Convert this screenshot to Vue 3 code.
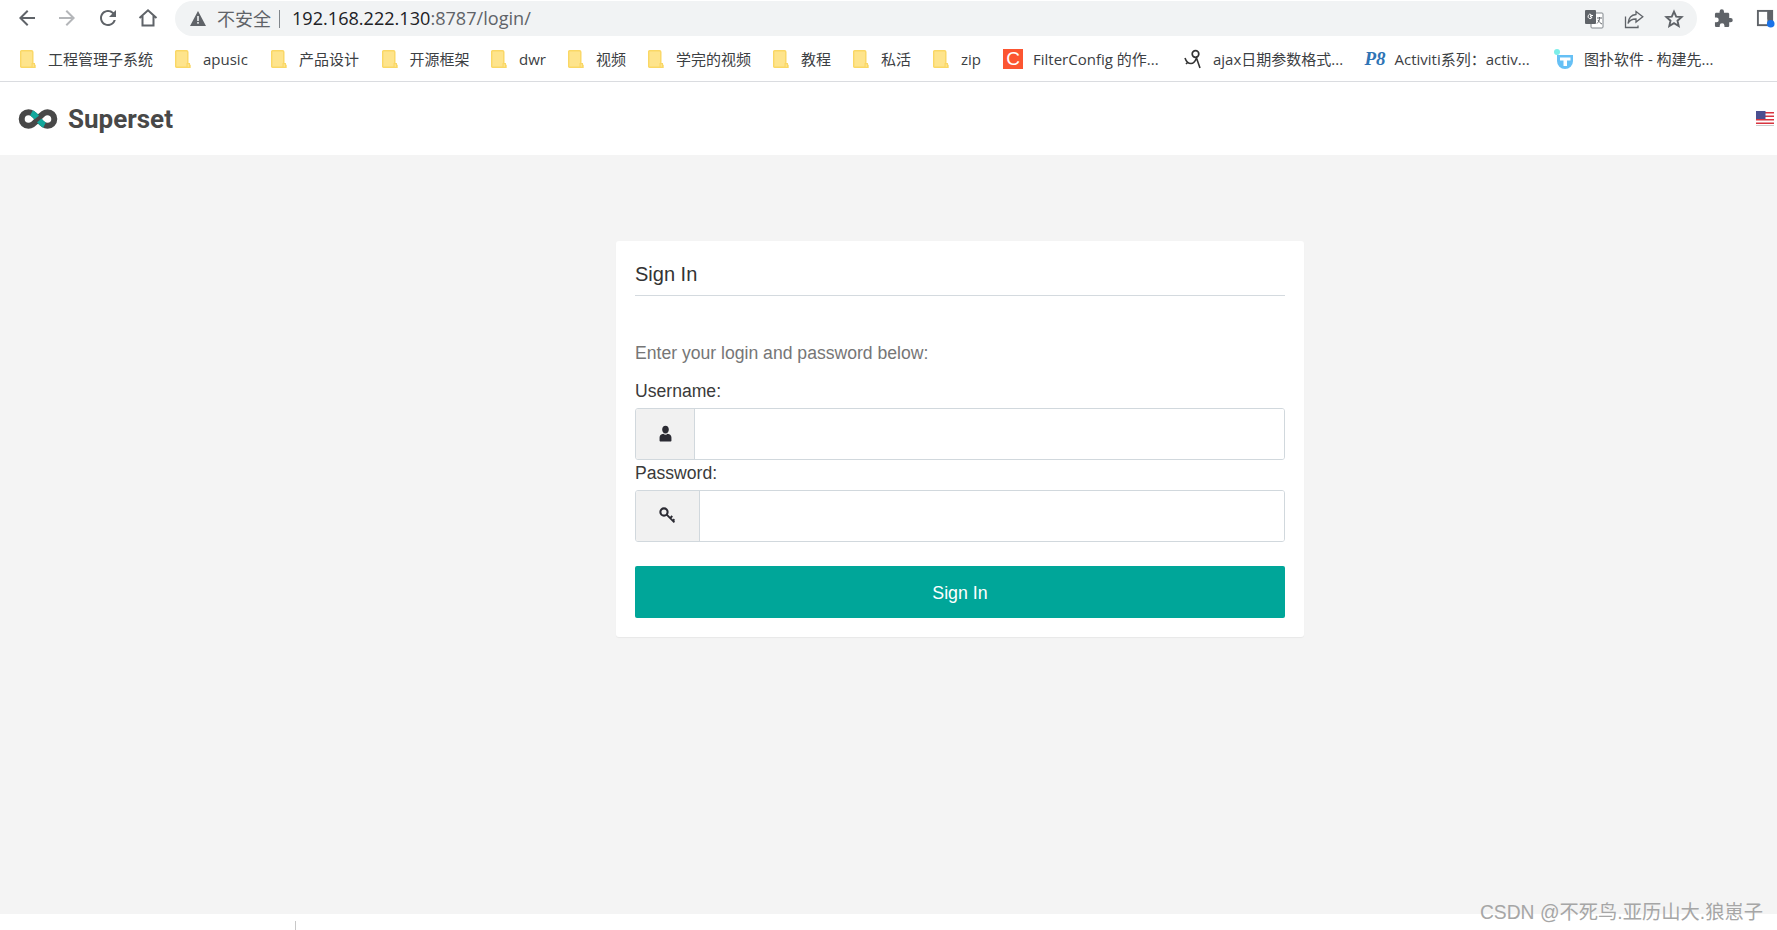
<script setup>
const bookmarks = [
  { label: '工程管理子系统', icon: 'folder', width: 155 },
  { label: 'apusic', icon: 'folder', width: 96 },
  { label: '产品设计', icon: 'folder', width: 110.5 },
  { label: '开源框架', icon: 'folder', width: 109.5 },
  { label: 'dwr', icon: 'folder', width: 77 },
  { label: '视频', icon: 'folder', width: 80 },
  { label: '学完的视频', icon: 'folder', width: 125 },
  { label: '教程', icon: 'folder', width: 80 },
  { label: '私活', icon: 'folder', width: 80 },
  { label: 'zip', icon: 'folder', width: 70 },
  { label: 'FilterConfig 的作...', icon: 'csdn', width: 180 },
  { label: 'ajax日期参数格式...', icon: 'ajax', width: 181.5 },
  { label: 'Activiti系列：activ...', icon: 'ps', width: 189.5 },
  { label: '图扑软件 - 构建先...', icon: 'topo', width: 170 }
]
</script>

<template>
  <div class="page">
    <div class="browser">
      <div class="toolbar">
        <div class="nav-icons">
          <svg class="tb-icon" viewBox="0 0 24 24"><path fill="#5f6368" d="M20 11H7.830l5.590-5.590L12 4l-8 8 8 8 1.410-1.410L7.830 13H20v-2z"/></svg>
          <svg class="tb-icon" viewBox="0 0 24 24"><path fill="#b4b6b9" d="M4 11h12.170l-5.590-5.590L12 4l8 8-8 8-1.410-1.410L16.170 13H4v-2z"/></svg>
          <svg class="tb-icon" viewBox="0 0 24 24"><path fill="#5f6368" d="M17.650 6.350A7.958 7.958 0 0 0 12 4c-4.420 0-7.990 3.580-7.990 8s3.570 8 7.990 8c3.730 0 6.840-2.550 7.730-6h-2.080A5.990 5.990 0 0 1 12 18c-3.310 0-6-2.690-6-6s2.690-6 6-6c1.660 0 3.140.690 4.220 1.780L13 11h7V4l-2.350 2.350z"/></svg>
          <svg class="tb-icon" viewBox="0 0 24 24"><path fill="none" stroke="#5f6368" stroke-width="2" stroke-linejoin="miter" d="M3.500 12 12 4.300l8.500 7.700M6.500 10v9.500h11V10"/></svg>
        </div>
        <div class="omnibox">
          <svg class="warn" viewBox="0 0 16 15"><path fill="#5f6368" d="M8 0 16 15H0z"/><rect x="7.200" y="5" width="1.600" height="5" fill="#f1f3f4"/><rect x="7.200" y="11" width="1.600" height="1.700" fill="#f1f3f4"/></svg>
          <span class="insecure">不安全</span>
          <span class="sep"></span>
          <span class="url"><span class="host">192.168.222.130</span>:8787/login/</span>
          <div class="omni-actions">
            <svg class="act" viewBox="0 0 20 20">
              <rect x="7" y="4" width="12" height="15" rx="1" fill="#fff" stroke="#80868b"/>
              <rect x="1" y="1" width="11" height="14" rx="1" fill="#5f6368"/>
              <path d="M9 6.500H6.500v1.500H8a2 2.200 0 1 1-.6-2.200" fill="none" stroke="#fff" stroke-width="1"/>
              <path d="M13 9h5M15.500 8v1.500c0 2-1.500 4-2.500 5M14 11c.7 1.500 2.500 3.500 4 4" fill="none" stroke="#5f6368"/>
            </svg>
            <svg class="act" viewBox="0 0 20 20"><path fill="none" stroke="#5f6368" stroke-width="1.300" d="M1.500 7.500v11h12.500v-2M12 2.500l6.800 5.300-6.800 5.300V10c-4 0-6.500 1.200-8 4.500C4.500 9.500 7.500 5.800 12 5.500z"/></svg>
            <svg class="act" viewBox="0 0 20 20"><path fill="none" stroke="#5f6368" stroke-width="1.900" d="M10 2.600l2.200 5 5.400.5-4.100 3.600 1.200 5.300-4.700-2.800-4.700 2.800 1.200-5.300-4.100-3.600 5.400-.5z"/></svg>
          </div>
        </div>
        <div class="ext-icons">
          <svg class="ext" viewBox="0 0 20 20"><path fill="#5f6368" d="M17.500 9.500H16V5.500c0-.9-.7-1.500-1.500-1.500h-4V2.500a2.300 2.300 0 0 0-4.600 0V4H2.500C1.700 4 1 4.600 1 5.500V9h1.500a2.500 2.500 0 0 1 0 5H1v3.500c0 .9.700 1.500 1.500 1.500H6v-1.500a2.500 2.500 0 0 1 5 0V19h3.500c.9 0 1.500-.7 1.500-1.500v-3.500h1.500a2.250 2.250 0 0 0 0-4.500z"/></svg>
          <svg class="ext" viewBox="0 0 20 20"><rect x="1" y="1" width="17" height="17" fill="#5f6368"/><rect x="3" y="3" width="9" height="13" fill="#fff"/><rect x="12" y="3" width="4" height="8" fill="#5f6368"/><circle cx="15.500" cy="15.500" r="4" fill="#1a73e8"/></svg>
        </div>
      </div>
      <div class="bookmarks">
        <div v-for="b in bookmarks" :key="b.label" class="bookmark" :style="{ width: b.width + 'px' }">
          <svg v-if="b.icon === 'folder'" class="folder" viewBox="0 0 16 18">
            <path fill="#fee48c" stroke="#fad765" stroke-width="1.400" d="M1.500.7h10c.9 0 1.300.5 1.300 1.300v13.500H15v1.800H1.500c-.5 0-.8-.3-.8-.8V1.500c0-.5.300-.8.800-.8z"/>
            <path fill="#fad765" d="M11.500 13h3.500v5h-3.500z"/>
            <path fill="#fee48c" d="M12.600 14.200h1.400v2.600h-1.400z"/>
          </svg>
          <span v-else-if="b.icon === 'csdn'" class="fav-csdn">C</span>
          <svg v-else-if="b.icon === 'ajax'" class="fav" viewBox="0 0 20 20">
            <circle cx="12.500" cy="5" r="3.300" fill="none" stroke="#333" stroke-width="1.700"/>
            <path fill="none" stroke="#333" stroke-width="1.600" d="M2 9c1 3 3 5.500 6 5.500 2 0 4-1.500 5.500-5.500l3.500 10M5 13l-2 2"/>
          </svg>
          <span v-else-if="b.icon === 'ps'" class="fav-ps">P8</span>
          <svg v-else class="fav" viewBox="0 0 20 20">
            <circle cx="3" cy="3" r="3" fill="#7ceee9"/>
            <path fill="#66c0f5" d="M3 6h16v6a8 8 0 0 1-16 0z"/>
            <rect x="6" y="8.500" width="10.500" height="3" fill="#fff"/>
            <rect x="9.500" y="11" width="3.500" height="6" fill="#fff"/>
          </svg>
          <span class="bm-label">{{ b.label }}</span>
        </div>
      </div>
    </div>

    <header class="site-header">
      <div class="brand">
        <svg class="logo" viewBox="0 0 40 20">
          <path fill="none" stroke="#484848" stroke-width="6" d="M20 10c-3-4-5.500-6.800-9.500-6.800a6.800 6.800 0 0 0 0 13.600c4 0 6.500-2.800 9.500-6.800s5.500-6.800 9.500-6.800a6.800 6.800 0 0 1 0 13.600c-4 0-6.500-2.800-9.500-6.800z"/>
          <path fill="none" stroke="#12a89c" stroke-width="6" d="M13.500 3.900C16 5.200 18 7.400 20 10s4 4.800 6.500 6.100"/>
          <path fill="none" stroke="#484848" stroke-width="4" d="M16 13.200 24 6.800"/>
        </svg>
        <span class="brand-name">Superset</span>
      </div>
      <svg class="flag" viewBox="0 0 18 15">
        <rect width="18" height="15" fill="#fff"/>
        <path fill="#d8343f" d="M0 1h18v1.600H0zM0 4.500h18v1.600H0zM0 8h18v1.600H0zM0 11.500h18v1.600H0z"/>
        <rect width="18" height="1" y="14" fill="#ccc"/>
        <rect width="9.500" height="8" fill="#4a4f90"/>
      </svg>
    </header>

    <main class="content">
      <div class="card">
        <div class="card-title">Sign In</div>
        <p class="help">Enter your login and password below:</p>
        <label class="field-label">Username:</label>
        <div class="input-group">
          <span class="addon addon-user">
            <svg class="glyph glyph-user" viewBox="0 0 16 16"><path fill="#2b2b33" d="M8 1.500c1.700 0 2.800 1.300 2.800 3.100 0 1.700-1 3.400-2.800 3.400S5.200 6.300 5.200 4.600C5.200 2.800 6.300 1.500 8 1.500zM3 14v-2.700c0-1.600 1.100-2.600 3.200-3.100.5.500 1.100.8 1.800.8s1.300-.3 1.800-.8c2.100.5 3.200 1.500 3.200 3.100V14c0 .4-.4.700-.8.700H3.800c-.4 0-.8-.3-.8-.7z"/></svg>
          </span>
          <input class="text-input" type="text" />
        </div>
        <label class="field-label">Password:</label>
        <div class="input-group">
          <span class="addon addon-key">
            <svg class="glyph" viewBox="0 0 16 16"><circle cx="4.700" cy="4.700" r="3.400" fill="none" stroke="#2b2b33" stroke-width="2"/><path fill="none" stroke="#2b2b33" stroke-width="1.800" d="M7 7l7.500 7.500M10.500 10.500l2-2M13 13l1.500-1.500"/></svg>
          </span>
          <input class="text-input" type="password" />
        </div>
        <button class="submit" type="button">Sign In</button>
      </div>
    </main>

    <footer class="strip"><span class="tick"></span></footer>
    <span class="watermark">CSDN @不死鸟.亚历山大.狼崽子</span>
  </div>
</template>

<style>
html, body { margin: 0; padding: 0; background: #fff; }
</style>

<style scoped>
.page {
  position: relative;
  height: 930px;
  overflow: hidden;
  display: flex;
  flex-direction: column;
  font-family: "Liberation Sans", Arial, sans-serif;
  background: #fff;
}
.browser { flex: none; height: 82px; box-sizing: border-box; border-bottom: 1px solid #dadce0; }
.toolbar {
  height: 37px;
  display: flex;
  align-items: flex-start;
  padding-left: 15px;
  box-sizing: border-box;
}
.nav-icons { display: flex; gap: 16.300px; padding-top: 6px; width: 160px; flex: none; }
.tb-icon { width: 24px; height: 24px; display: block; }
.omnibox {
  flex: none;
  width: 1522px;
  height: 35px;
  margin-top: 1px;
  background: #f1f3f4;
  border-radius: 18px;
  display: flex;
  align-items: center;
  padding-left: 15px;
  box-sizing: border-box;
  font-family: "Noto Sans CJK SC", "Liberation Sans", sans-serif;
}
.warn { width: 16px; height: 15px; flex: none; margin-right: 11px; }
.insecure { color: #5f6368; width: 54px; font-size: 18px; margin-bottom: 2px; white-space: nowrap; }
.sep { width: 1px; height: 18px; background: #80868b; margin: 0 12px 0 8px; }
.url { color: #5f6368; font-family: "Open Sans", sans-serif; font-size: 18.100px; margin-bottom: 2px; white-space: nowrap; }
.host { color: #202124; }
.omni-actions { margin-left: auto; display: flex; gap: 20px; padding-right: 13px; }
.act { width: 20px; height: 20px; display: block; }
.ext-icons { display: flex; gap: 23px; margin-left: 17px; padding-top: 9px; }
.ext { width: 19px; height: 19px; display: block; }
.bookmarks {
  height: 44px;
  display: flex;
  align-items: center;
  padding: 0 0 1px 20px;
  box-sizing: border-box;
  white-space: nowrap;
  font-family: "Open Sans", "Noto Sans CJK SC", sans-serif;
  font-size: 15px;
  color: #3c4043;
}
.bookmark { display: flex; align-items: center; flex: none; }
.folder { width: 16px; height: 18px; margin-right: 12px; flex: none; }
.fav { width: 20px; height: 20px; margin-right: 10px; flex: none; }
.fav-csdn {
  width: 20px; height: 20px; background: #fc5531; color: #fff; margin-right: 10px;
  display: flex; align-items: center; justify-content: center;
  font-family: "Liberation Sans", sans-serif; font-size: 19px;
}
.fav-ps {
  width: 20px; margin-right: 10px; color: #2f74b5; font-family: "Liberation Serif", serif;
  font-style: italic; font-weight: bold; font-size: 19px; line-height: 20px;
}
.site-header {
  flex: none;
  height: 73px;
  display: flex;
  align-items: center;
  justify-content: space-between;
  padding: 0 3px 0 18px;
  background: #fff;
}
.brand { display: flex; align-items: center; gap: 10px; margin-top: 1px; }
.logo { width: 40px; height: 20px; display: block; }
.brand-name { font-family: Roboto, sans-serif; font-weight: 700; font-size: 26px; color: #484848; }
.flag { width: 18px; height: 15px; display: block; }
.content {
  flex: 1;
  background: #f4f4f4;
  padding: 86px 0 0 616px;
  min-height: 0;
}
.card {
  width: 688px;
  box-sizing: border-box;
  padding: 19px 19px 19px;
  background: #fff;
  border-radius: 3px;
  box-shadow: 0 1px 1px rgba(0, 0, 0, 0.05);
  color: #333;
}
.card-title {
  font-size: 20px;
  line-height: 26px;
  padding: 1px 0 8px;
  border-bottom: 1px solid #d4dadf;
  color: #333;
}
.help {
  margin: 46px 0 0;
  font-size: 17.600px;
  line-height: 22px;
  color: #767676;
}
.field-label {
  display: block;
  font-size: 17.600px;
  line-height: 20px;
  padding-top: 2px;
  color: #3a3a3a;
}
.help + .field-label { margin-top: 15px; margin-bottom: 7px; }
.input-group + .field-label { margin-bottom: 7px; }
.input-group {
  display: flex;
  height: 52px;
  box-sizing: border-box;
  border: 1px solid #d1d8dd;
  border-radius: 3px;
  overflow: hidden;
  margin-bottom: 1px;
}
.addon {
  flex: none;
  background: #f1f1f1;
  border-right: 1px solid #d1d8dd;
  display: flex;
  align-items: center;
  justify-content: center;
  box-sizing: border-box;
  padding-bottom: 2px;
}
.addon-user { width: 59px; }
.addon-key { width: 64px; }
.glyph { width: 17px; height: 17px; display: block; }
.glyph-user { width: 19px; height: 19px; }
.text-input {
  flex: 1;
  min-width: 0;
  border: 0;
  outline: 0;
  padding: 0 12px;
  background: #fff;
}
.submit {
  display: block;
  width: 100%;
  height: 52px;
  margin-top: 24px;
  padding: 2px 0 0;
  border: 0;
  border-radius: 2px;
  background: #00a699;
  color: #fff;
  font-family: inherit;
  font-size: 17.800px;
}
.strip { flex: none; height: 16px; position: relative; background: #fff; }
.tick { position: absolute; left: 295px; top: 7px; width: 1px; height: 9px; background: #c8c8c8; }
.watermark {
  position: absolute;
  right: 14px;
  top: 901px;
  font-family: "Liberation Sans", "Noto Sans CJK SC", sans-serif;
  font-size: 19.300px;
  line-height: 24px;
  color: #a6a6a6;
  white-space: nowrap;
}
</style>
